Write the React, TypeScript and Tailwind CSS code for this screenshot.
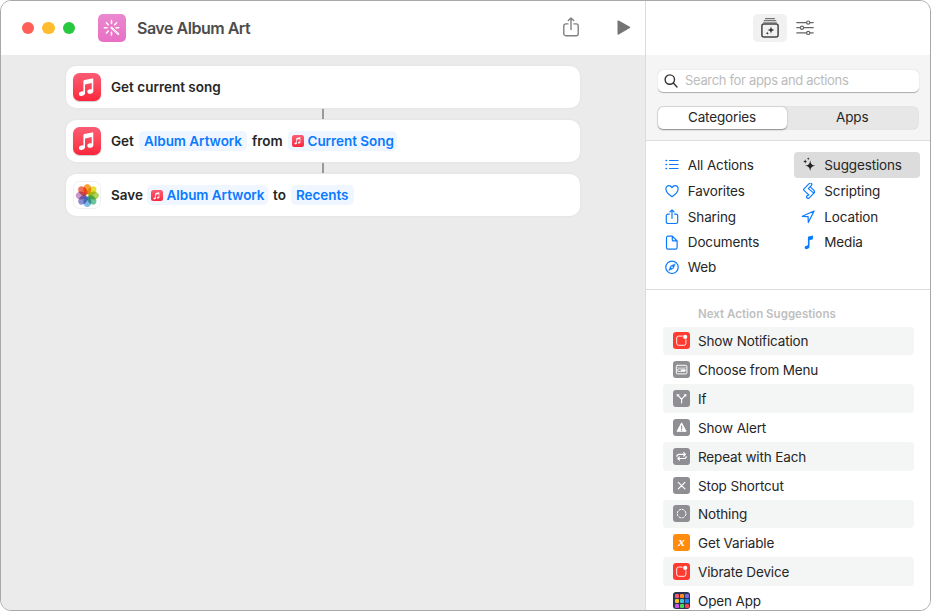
import type { ReactNode } from "react"
import clsx from "clsx"

function ShareIcon({ className }: { className?: string }) {
  return (
    <svg viewBox="0 0 16 20" className={className} fill="none" stroke="currentColor" strokeWidth="1.4" strokeLinecap="round" strokeLinejoin="round">
      <path d="M5 6.9H2.8A2 2 0 0 0 .8 8.900v7.800a2 2 0 0 0 2 2h10.400a2 2 0 0 0 2-2V8.900a2 2 0 0 0-2-2H11" />
      <path d="M8 12.500V1M5.300 3.500 8 .9l2.700 2.600" />
    </svg>
  )
}

function WandIcon() {
  return (
    <svg viewBox="0 0 28 28" className="size-7" fill="none" stroke="#fff" strokeWidth="1.5" strokeLinecap="round">
      <path d="M13.500 6.600v2.800M8.400 8.800l1.900 1.900M6.300 13.800H9M8.500 18.900l1.800-1.900M13.500 18.300v2.800M18.600 8.800l-1.900 1.900M18 13.800h2.700" />
      <path d="m13.500 13.700 6.800 6.400" strokeWidth="2" />
      <path d="m15.200 15.300 5 4.700" stroke="#f3b5e0" strokeWidth=".6" />
    </svg>
  )
}

function LibraryIcon() {
  return (
    <svg viewBox="0 0 18 20" className="h-5 w-[18px]" fill="none" stroke="#444" strokeLinecap="round">
      <path d="M4.500.7h9" stroke="#555" />
      <path d="M3.200 2.700h11.600" stroke="#777" strokeWidth="1.200" />
      <path d="M2.500 4.600h13" stroke="#999" strokeWidth="1.200" />
      <rect x=".9" y="6" width="16.200" height="12.900" rx="2" strokeWidth="1.500" />
      <path fill="#333" stroke="none" d="M10 8.300c.4 2.600 1 3.300 3.500 3.800-2.500.5-3.100 1.200-3.500 3.800-.4-2.600-1-3.300-3.500-3.800 2.500-.5 3.100-1.200 3.500-3.800ZM6.300 13.500c.2 1.100.6 1.500 1.700 1.700-1.100.2-1.500.6-1.700 1.700-.2-1.100-.6-1.500-1.700-1.700 1.100-.2 1.500-.6 1.700-1.700Z" />
    </svg>
  )
}

function SlidersIcon() {
  return (
    <svg viewBox="0 0 18 16" className="block h-4 w-[18px]" fill="none" stroke="#666" strokeWidth="1.200" strokeLinecap="round">
      <path d="M.8 2.600h9.600M14 2.600h3.200M.8 7.700h3.400M7.800 7.700h9.400M.8 12.900h9.600M14 12.900h3.200" />
      <circle cx="12.200" cy="2.600" r="1.600" />
      <circle cx="6" cy="7.700" r="1.600" />
      <circle cx="12.200" cy="12.900" r="1.600" />
    </svg>
  )
}

function MusicIcon({ small }: { small?: boolean }) {
  return (
    <span
      className={clsx(
        "block shrink-0 bg-linear-to-b from-[#fb5c74] to-[#fa233b]",
        small ? "size-[11.500px] rounded-[2.500px]" : "size-7 rounded-[6.500px] shadow-[0_1px_1px_rgba(0,0,0,0.2)]"
      )}
    >
      <svg viewBox="0 0 28 28" className="block size-full" fill="#fff">
        <path d="M10.400 8.300q0-1 1-1.200l7.800-1.700q1.100-.2 1.100.9v11.900h-1.600V10l-6.700 1.400v9.300h-1.600Z" />
        <ellipse cx="8.900" cy="20.600" rx="3" ry="2.200" transform="rotate(-15 8.900 20.600)" />
        <ellipse cx="17.300" cy="18.500" rx="3" ry="2.200" transform="rotate(-15 17.300 18.500)" />
      </svg>
    </span>
  )
}

const petals = ["#f8981d", "#e6dc1e", "#a5cf4c", "#5cbf8d", "#6fb1e4", "#7f83cb", "#c58cc4", "#f0604d"]

function PhotosIcon() {
  return (
    <span className="block size-7 shrink-0 rounded-[6.500px] border border-[#f1f1f1] bg-white">
      <svg viewBox="-13.300 -13.500 26 26" className="block size-full isolate">
        {petals.map((color, i) => (
          <ellipse
            key={color}
            cx="0"
            cy="-6.300"
            rx="4"
            ry="5.300"
            fill={color}
            fillOpacity=".9"
            transform={`rotate(${i * 45})`}
            className="mix-blend-multiply"
          />
        ))}
      </svg>
    </span>
  )
}

function Card({ icon, children }: { icon: ReactNode; children: ReactNode }) {
  return (
    <div className="flex h-[42px] w-[514px] items-center rounded-[10px] bg-white pl-[7px] text-[13.500px] font-semibold text-[#262626] shadow-[0_0_3px_rgba(0,0,0,0.06)]">
      {icon}
      <div className="ml-2.5 flex items-center whitespace-nowrap">{children}</div>
    </div>
  )
}

function Token({ music, className, children }: { music?: boolean; className: string; children: ReactNode }) {
  return (
    <span className={clsx("flex h-5 items-center gap-1 rounded-[5px] bg-[#f0f6ff] tracking-[-0.050px] text-[#0a7aff]", music ? "pl-1" : "pl-[5px]", className)}>
      {music && <MusicIcon small />}
      {children}
    </span>
  )
}

function Connector() {
  return <div className="mt-px mb-[1.200px] h-2.5 w-0.5 bg-[#98989d]" />
}

function CategoryIcon({ name }: { name: string }) {
  const common = {
    viewBox: "0 0 16 16",
    className: "block size-4",
    fill: "none",
    stroke: "#0a7aff",
    strokeWidth: 1.2,
    strokeLinecap: "round" as const,
    strokeLinejoin: "round" as const,
  }
  switch (name) {
    case "All Actions":
      return (
        <svg {...common}>
          <path d="M5.500 3.500h8.600M5.500 7.500h8.600M5.500 11.500h8.600" />
          <path d="M2.100 3.500h.4M2.100 7.500h.4M2.100 11.500h.4" strokeWidth="1.600" />
        </svg>
      )
    case "Favorites":
      return (
        <svg {...common}>
          <path d="M8 13.700C4.500 11.300 1.900 8.900 1.900 5.900c0-1.900 1.300-3.300 3-3.300C6.300 2.600 7.400 3.300 8 4.700c.6-1.400 1.700-2.100 3.100-2.100 1.700 0 3 1.400 3 3.300 0 3-2.600 5.400-6.100 7.800Z" />
        </svg>
      )
    case "Sharing":
      return (
        <svg {...common}>
          <path d="M5.400 5.100H4a1.700 1.700 0 0 0-1.700 1.700v6A1.700 1.700 0 0 0 4 14.500h8a1.700 1.700 0 0 0 1.700-1.700v-6A1.700 1.700 0 0 0 12 5.100h-1.400M8 9.300V.9M5.900 2.900 8 .8l2.100 2.100" />
        </svg>
      )
    case "Documents":
      return (
        <svg {...common}>
          <path d="M8.300 1.100H4.100a1.600 1.600 0 0 0-1.600 1.600v9.900a1.600 1.600 0 0 0 1.600 1.600h7.400a1.600 1.600 0 0 0 1.600-1.600V6ZM8.300 1.300v3.600q0 1 1 1h3.700" />
        </svg>
      )
    case "Web":
      return (
        <svg {...common}>
          <circle cx="8" cy="7.300" r="6.200" />
          <path d="m11.200 4.100-1.900 4.400-4.500 2 1.900-4.500Z" fill="#0a7aff" strokeWidth=".5" />
          <circle cx="8" cy="7.300" r=".9" fill="#fff" stroke="none" />
        </svg>
      )
    case "Suggestions":
      return (
        <svg {...common} fill="#222" stroke="none">
          <path d="M9.200 3.300c.6 3.900 1.400 4.900 5.200 5.500-3.800.6-4.600 1.600-5.200 5.500-.6-3.900-1.400-4.900-5.200-5.500 3.800-.6 4.600-1.600 5.200-5.500ZM4.200 2.300c.3 1.500.6 1.900 2.100 2.200-1.500.3-1.800.7-2.100 2.200-.3-1.500-.6-1.900-2.100-2.200 1.500-.3 1.800-.7 2.100-2.200ZM7.300.3c.2 1 .4 1.300 1.400 1.500-1 .2-1.200.5-1.400 1.500-.2-1-.4-1.300-1.400-1.500 1-.2 1.200-.5 1.400-1.500Z" />
        </svg>
      )
    case "Scripting":
      return (
        <svg {...common}>
          <path d="M8.600.2 3 5.800q-.8.800 0 1.600l4.800 4.500M8.600.2c1.300-.8 2.800.6 2 2L7.300 5.600l5.600 4.500-4.800 5c-1.400 1.100-3.200-.6-2.200-2l1.900-1.400M12.900 10.100c1-1.200.8-1.900 0-2.700L9.400 3.900" />
        </svg>
      )
    case "Location":
      return (
        <svg {...common}>
          <path d="M13.100 2 1.300 7.300l5.800.4.200 5.900Z" />
        </svg>
      )
    default:
      return (
        <svg {...common} fill="#0a7aff" stroke="none">
          <path d="M6.900 2.400Q6.900 1.700 7.600 1.500L11.900.4v3.800L8.500 5.200v6.400c0 1.500-1.200 2.200-2.600 2.500-1.300.2-2.200-.4-2.200-1.500s.8-1.600 1.900-1.800c1-.2 1.300-.4 1.300-1.200Z" />
        </svg>
      )
  }
}

function Category({ name, tall, active }: { name: string; tall?: boolean; active?: boolean }) {
  return (
    <li
      className={clsx(
        "flex items-center rounded-[4px] pl-[7px]",
        tall ? "h-[26px]" : "h-[25px]",
        active && "bg-[#dcdcdc]"
      )}
    >
      <CategoryIcon name={name} />
      <span className="ml-[7.800px]">{name}</span>
    </li>
  )
}

function ActionIcon({ name }: { name: string }) {
  const common = {
    viewBox: "0 0 17 17",
    className: "block size-[17px]",
    fill: "none",
    stroke: "#fff",
    strokeLinecap: "round" as const,
    strokeLinejoin: "round" as const,
  }
  switch (name) {
    case "Show Notification":
    case "Vibrate Device":
      return (
        <svg {...common}>
          <path d="M9.300 4.100H5.600a1.900 1.900 0 0 0-1.900 1.900v5.400a1.900 1.900 0 0 0 1.900 1.900H11a1.900 1.900 0 0 0 1.900-1.900V7.700" strokeWidth=".9" />
          <circle cx="12.200" cy="4.900" r="2.100" fill="#fff" stroke="none" />
        </svg>
      )
    case "Choose from Menu":
      return (
        <svg {...common}>
          <rect x="3.300" y="4.300" width="10.600" height="8.600" rx="1" />
          <path d="M4 6.300h9.200" strokeWidth=".4" />
          <path d="M5.200 7.900h6.800v2.600H5.200z" strokeWidth=".8" />
          <path d="M8.400 9.200h3.400" strokeWidth="1.600" />
        </svg>
      )
    case "If":
      return (
        <svg {...common} strokeWidth="1.100">
          <path d="M8.600 13V9.300L4.900 5.200M8.600 9.300l3.700-4.100" />
          <path d="m4.100 4.400 2.300.3-2 1.800ZM13.100 4.400l-2.300.3 2 1.800Z" fill="#fff" strokeWidth=".4" />
        </svg>
      )
    case "Show Alert":
      return (
        <svg {...common}>
          <path d="m8.600 4.300 4.300 7.900H4.300Z" fill="#fff" strokeWidth="1.300" />
          <path d="M8.600 7v2.800M8.600 11.400v.1" stroke="#8e8e93" strokeWidth="1.100" />
        </svg>
      )
    case "Repeat with Each":
      return (
        <svg {...common} strokeWidth="1.200">
          <path d="M3.900 8.300a1.900 1.900 0 0 1 1.900-1.900h5.900M10.700 4.700l1.700 1.700-1.700 1.600M13.200 8.600a1.900 1.900 0 0 1-1.900 1.900H5.400M6.500 8.900l-1.700 1.600 1.700 1.700" />
        </svg>
      )
    case "Stop Shortcut":
      return (
        <svg {...common} strokeWidth="1.200">
          <path d="m5.300 5.300 6.600 6.600M11.900 5.300l-6.600 6.600" />
        </svg>
      )
    case "Nothing":
      return (
        <svg {...common} strokeLinecap="butt">
          <circle cx="8.600" cy="8.600" r="4.300" strokeDasharray="2.577 .8" />
        </svg>
      )
    case "Get Variable":
      return <span className="block pb-[3px] font-['Liberation_Serif',serif] text-[13px] leading-none font-bold text-white italic">x</span>
    default:
      return (
        <span className="grid grid-cols-3 gap-[1px]">
          {["bg-[#f4586d]", "bg-[#ff8a1f]", "bg-[#7b66dd]", "bg-[#ffc21c]", "bg-[#3cc3e0]", "bg-[#1687f5]", "bg-[#d84ee8]", "bg-[#45d957]", "bg-[#f4434f]"].map((c) => (
            <i key={c} className={clsx("block size-1 rounded-[1px]", c)} />
          ))}
        </span>
      )
  }
}

const actions = [
  { name: "Show Notification", bg: "bg-[#ff3b30]" },
  { name: "Choose from Menu", bg: "bg-[#8e8e93]" },
  { name: "If", bg: "bg-[#8e8e93]" },
  { name: "Show Alert", bg: "bg-[#8e8e93]" },
  { name: "Repeat with Each", bg: "bg-[#8e8e93]" },
  { name: "Stop Shortcut", bg: "bg-[#8e8e93]" },
  { name: "Nothing", bg: "bg-[#8e8e93]" },
  { name: "Get Variable", bg: "bg-[#ff8c0e]" },
  { name: "Vibrate Device", bg: "bg-[#ff3b30]" },
  { name: "Open App", bg: "bg-[#2c3454]" },
]

function Editor() {
  return (
    <main className="flex w-[644px] shrink-0 flex-col">
      <header className="flex h-[54px] shrink-0 items-center bg-white pl-[20.500px]">
        <div className="flex gap-2">
          <span className="size-[12.500px] rounded-full bg-[#ff5f57]" />
          <span className="size-[12.500px] rounded-full bg-[#febc2e]" />
          <span className="size-[12.500px] rounded-full bg-[#28c840]" />
        </div>
        <div className="ml-[23px] rounded-[5px] bg-linear-to-b from-[#ea88cf] to-[#e86fc4]">
          <WandIcon />
        </div>
        <h1 className="ml-[11px] w-[426px] text-[16px] font-semibold tracking-[-0.480px] text-[#4c4c4c]">Save Album Art</h1>
        <ShareIcon className="mb-0.5 h-5 w-4 text-[#808080]" />
        <svg viewBox="0 0 14 16" className="ml-[38px] h-4 w-3.5" fill="#747476">
          <path d="M.5 1.300q0-1.300 1.200-.7l11.100 6.200q1 .6 0 1.200L1.700 14.500q-1.200.6-1.200-.7Z" />
        </svg>
      </header>
      <section className="flex grow flex-col items-center bg-[#ebebeb] pt-[11px]">
        <Card icon={<MusicIcon />}>Get current song</Card>
        <Connector />
        <Card icon={<MusicIcon />}>
          <span className="w-[28px]">Get</span>
          <Token className="w-[108px]">Album Artwork</Token>
          <span className="ml-[5px] w-[36px]">from</span>
          <Token music className="w-[109px]">Current Song</Token>
        </Card>
        <Connector />
        <Card icon={<PhotosIcon />}>
          <span className="w-[36px]">Save</span>
          <Token music className="w-[121px]">Album Artwork</Token>
          <span className="ml-[5px] w-[18px]">to</span>
          <Token className="w-[63px]">Recents</Token>
        </Card>
      </section>
    </main>
  )
}

function Sidebar() {
  return (
    <aside className="flex grow flex-col border-l border-[#dcdcdc] bg-white text-[13.500px] tracking-[-0.140px] text-[#262626]">
      <header className="flex h-[54px] shrink-0 items-center pl-[107px]">
        <button className="flex h-7 w-[34px] items-center justify-center rounded-[5px] bg-[#f1f1f1]">
          <LibraryIcon />
        </button>
        <span className="ml-[9px]">
          <SlidersIcon />
        </span>
      </header>

      <div className="h-[86px] shrink-0 border-b border-[#dedede] bg-[#f5f5f5] px-[11.500px] pt-[15px]">
        <div className="flex h-[21.500px] items-center rounded-[5px] bg-white pl-[6.500px] text-[13px] leading-[20px] text-[#bcbcbc] shadow-[0_0.500px_1px_rgba(0,0,0,0.3)]">
          <svg viewBox="0 0 14 14" className="mr-[7px] size-3.5" fill="none" stroke="#333" strokeWidth="1.400" strokeLinecap="round">
            <circle cx="5.800" cy="5.600" r="4.700" />
            <path d="m9.300 9.100 3.700 3.900" />
          </svg>
          <span className="pb-px tracking-[-0.330px]">Search for apps and actions</span>
        </div>
        <div className="mt-[15.500px] mr-[0.500px] flex h-[22px] rounded-[5px] bg-[#e7e7e7] text-center leading-[20px] shadow-[0_0_0_0.500px_#d6d6d6]">
          <span className="w-[129px] rounded-[5px] bg-white shadow-[0_0.500px_1.500px_rgba(0,0,0,0.4)]">Categories</span>
          <span className="grow">Apps</span>
        </div>
      </div>

      <div className="flex h-[149px] shrink-0 border-b border-[#dcdcdc] pt-[11px] pl-[11px]">
        <ul className="w-[136.500px]">
          <Category name="All Actions" tall />
          <Category name="Favorites" tall />
          <Category name="Sharing" tall />
          <Category name="Documents" />
          <Category name="Web" />
        </ul>
        <ul className="w-[126.500px]">
          <Category name="Suggestions" tall active />
          <Category name="Scripting" tall />
          <Category name="Location" tall />
          <Category name="Media" />
        </ul>
      </div>

      <div className="pr-4 pl-[17px]">
        <h2 className="h-[36.500px] pt-[16px] pl-[35px] text-[11.500px] font-semibold tracking-[0.020px] text-[#bfbfbf]">Next Action Suggestions</h2>
        <ul>
          {actions.map(({ name, bg }, i) => (
            <li key={name} className={clsx("flex h-[28.850px] items-center rounded-[4px] pl-2.5", i % 2 === 0 && "bg-[#f4f5f5]")}>
              <span className={clsx("mr-2 flex size-[17px] items-center justify-center rounded-[3px]", bg)}>
                <ActionIcon name={name} />
              </span>
              <span className="pt-px">{name}</span>
            </li>
          ))}
        </ul>
      </div>
    </aside>
  )
}

export default function App() {
  return (
    <div className="h-[612px] w-[932px] bg-white font-['Inter',sans-serif]">
      <div className="flex h-[611px] w-[931px] overflow-hidden rounded-[11px] border border-[#a8a8a8]">
        <Editor />
        <Sidebar />
      </div>
    </div>
  )
}
